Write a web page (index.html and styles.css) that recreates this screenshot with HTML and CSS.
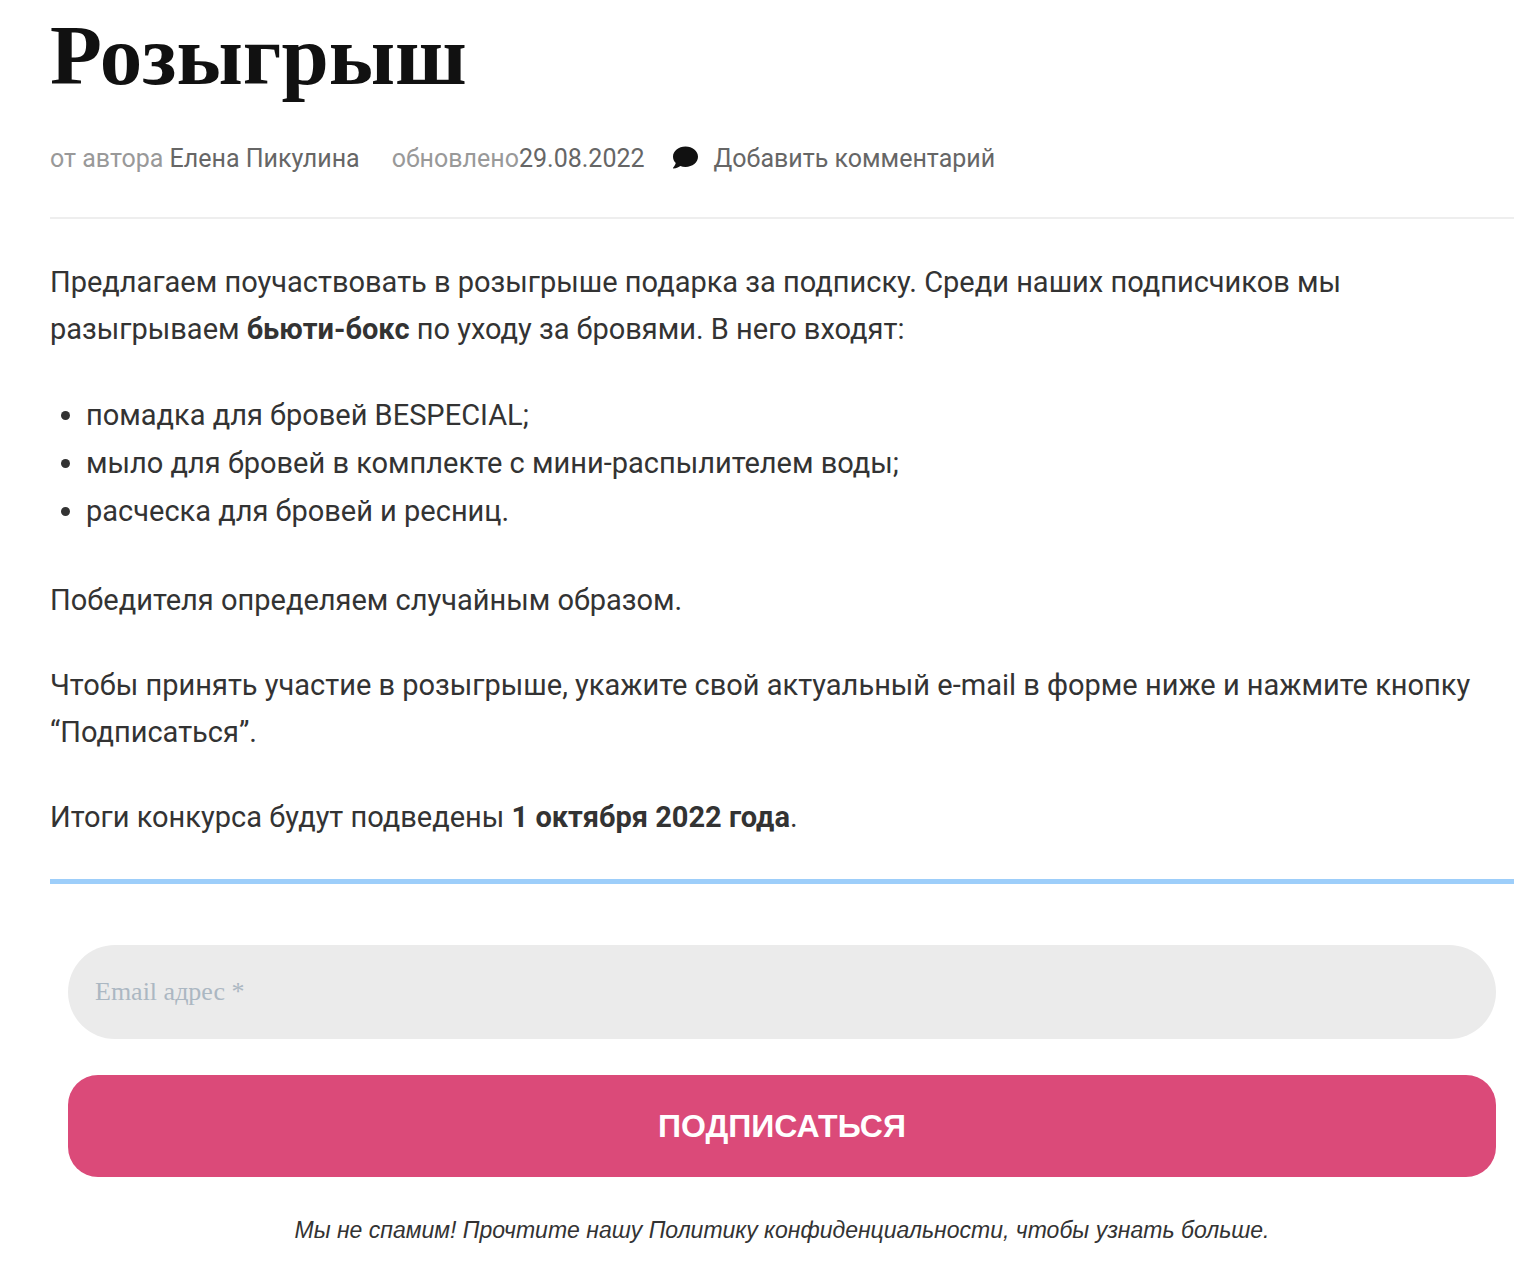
FILE: index.html
```html
<!DOCTYPE html>
<html lang="ru">
<head>
<meta charset="utf-8">
<title>Розыгрыш</title>
<link rel="stylesheet" href="styles.css">
</head>
<body>
<article class="post">
	<header class="post-header">
		<h1>Розыгрыш</h1>
		<div class="meta">
			<span class="byline">от автора <a href="#">Елена Пикулина</a></span>
			<span class="posted">обновлено<a href="#">29.08.2022</a></span>
			<span class="comments">
				<svg class="comment-icon" viewBox="0 0 512 512" aria-hidden="true"><path fill="#111" d="M256 32C114.600 32 0 125.100 0 240c0 49.600 21.400 95 57 130.700C44.500 421.100 2.700 466 2.200 466.500c-2.200 2.300-2.800 5.700-1.500 8.700S4.800 480 8 480c66.300 0 116-31.800 140.600-51.400 32.700 12.300 69 19.400 107.400 19.400 141.400 0 256-93.100 256-208S397.400 32 256 32z"/></svg>
				<a href="#comments">Добавить комментарий</a>
			</span>
		</div>
	</header>
	<div class="content">
		<p>Предлагаем поучаствовать в розыгрыше подарка за подписку. Среди наших подписчиков мы разыгрываем <strong>бьюти-бокс</strong> по уходу за бровями. В него входят:</p>
		<ul>
			<li>помадка для бровей BESPECIAL;</li>
			<li>мыло для бровей в комплекте с мини-распылителем воды;</li>
			<li>расческа для бровей и ресниц.</li>
		</ul>
		<p>Победителя определяем случайным образом.</p>
		<p>Чтобы принять участие в розыгрыше, укажите свой актуальный e-mail в форме ниже и нажмите кнопку “Подписаться”.</p>
		<p>Итоги конкурса будут подведены <strong>1 октября 2022 года</strong>.</p>
	</div>
	<form class="subscribe">
		<input type="email" class="email" name="email" aria-label="Email адрес" placeholder="Email адрес *">
		<button type="submit" class="send">ПОДПИСАТЬСЯ</button>
		<p class="note">Мы не спамим! Прочтите нашу <a href="#">Политику конфиденциальности</a>, чтобы узнать больше.</p>
	</form>
</article>
</body>
</html>
```

FILE: styles.css
```css
body {
	margin: 0;
	background-color: #fff;
	color: #333;
	font-family: Roboto, sans-serif;
	font-size: 29px;
	line-height: 47px;
}
a {
	color: inherit;
	text-decoration: none;
}
.post {
	padding: 5px 22px 20px 50px;
}
.post-header {
	border-bottom: 2px solid #eee;
	padding-bottom: 38px;
}
h1 {
	margin: 0 0 34px;
	color: #111;
	font-family: "Liberation Serif", "Times New Roman", serif;
	font-size: 85px;
	font-weight: bold;
	line-height: 100px;
}
.meta {
	display: flex;
	align-items: center;
	color: #999;
	font-size: 25px;
	line-height: 40px;
}
.meta a {
	color: #666;
}
.byline {
	margin-right: 32px;
}
.posted {
	margin-right: 28px;
}
.comments {
	display: flex;
	align-items: center;
	gap: 16px;
}
.comment-icon {
	width: 25px;
	height: 25px;
	margin-bottom: 4px;
}
.content {
	padding: 40px 0 38px;
}
.content p {
	margin: 0 0 38px;
}
.content p:last-child {
	margin-bottom: 0;
}
.content ul {
	margin: 0 0 42px;
	padding-left: 36px;
	line-height: 48px;
}
.subscribe {
	border-top: 5px solid #9dcefa;
	padding: 61px 18px 0;
}
.email,
.send {
	display: block;
	box-sizing: border-box;
	width: 100%;
	border: 0;
}
.email {
	height: 94px;
	margin-bottom: 36px;
	padding: 0 27px;
	border-radius: 47px;
	background-color: #ebebeb;
	font-family: "Liberation Serif", "Times New Roman", serif;
	font-size: 26px;
}
.email::placeholder {
	color: #abb7c2;
}
.send {
	height: 102px;
	border-radius: 30px;
	background-color: #db4a79;
	color: #fff;
	font-family: "Liberation Sans", Arial, sans-serif;
	font-size: 32px;
	font-weight: bold;
	cursor: pointer;
}
.note {
	margin: 35px 0 0;
	font-family: "Liberation Sans", Arial, sans-serif;
	font-size: 23px;
	font-style: italic;
	line-height: 36px;
	text-align: center;
}
```
